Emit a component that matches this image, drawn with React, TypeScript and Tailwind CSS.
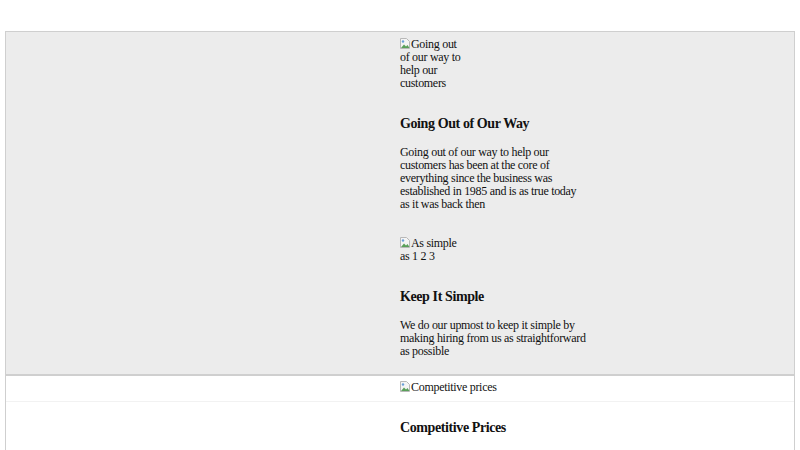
const features = [
  {
    alt: "Going out of our way to help our customers",
    title: "Going Out of Our Way",
    body: "Going out of our way to help our customers has been at the core of everything since the business was established in 1985 and is as true today as it was back then",
    width: "w-[184px]",
  },
  {
    alt: "As simple as 1 2 3",
    title: "Keep It Simple",
    body: "We do our upmost to keep it simple by making hiring from us as straightforward as possible",
    width: "w-[192px]",
  },
];

function BrokenImage() {
  return (
    <svg width="10" height="11" viewBox="0 0 10 11" className="mr-px inline-block align-[-1px]">
      <path d="M0.5 0.5h6l3 3v7h-9z" fill="#f4f4f4" stroke="#b8b8b8" />
      <path d="M1 10l3-3.5 2 2 1.5-1.5 2 3z" fill="#5aa05a" />
      <circle cx="3" cy="3.5" r="1.2" fill="#6a9fd8" />
    </svg>
  );
}

export default function App() {
  return (
    <main className="min-h-[450px] bg-white pt-[31px] font-['Liberation_Serif',serif] text-[#111]">
      <section className="mx-[5px] border border-[#cfcfcf] bg-[#ececec]">
        <div className="grid grid-cols-2">
          <div />
          <div className="pt-[6px] pb-[16px]">
            {features.map((f, i) => (
              <div key={f.title} className={i > 0 ? "mt-[26px]" : ""}>
                <div className="w-[62px] text-[12px] leading-[13px] tracking-[-0.3px]">
                  <BrokenImage />
                  {f.alt}
                </div>
                <h3 className="mt-[25px] text-[14px] font-bold leading-[18px] tracking-[-0.4px]">
                  {f.title}
                </h3>
                <p className={`mt-[13px] ${f.width} text-[12px] leading-[13px] tracking-[-0.3px]`}>
                  {f.body}
                </p>
              </div>
            ))}
          </div>
        </div>
      </section>
      <section className="mx-[5px] h-[80px] border border-[#cfcfcf] bg-white">
        <div className="border-b border-[#f2f2f2]">
          <div className="grid grid-cols-2">
            <div />
            <div className="h-[25px] pt-[5px] text-[12px] leading-[13px] tracking-[-0.3px]">
              <BrokenImage />
              Competitive prices
            </div>
          </div>
        </div>
        <div className="grid grid-cols-2">
          <div />
          <h3 className="pt-[17px] text-[14px] font-bold leading-[18px] tracking-[-0.4px]">
            Competitive Prices
          </h3>
        </div>
      </section>
    </main>
  );
}
